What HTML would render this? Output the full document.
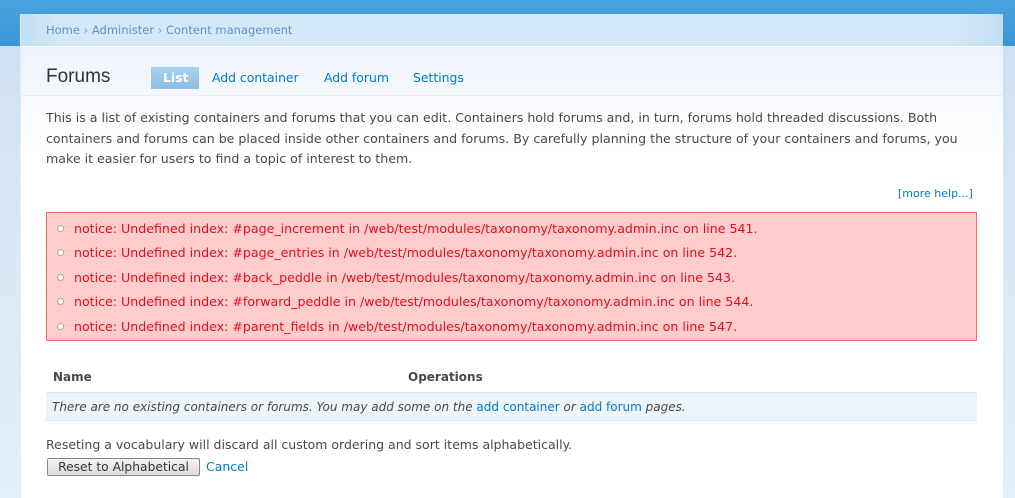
<!DOCTYPE html>
<html><head><meta charset="utf-8"><style>
body{margin:0;width:1015px;height:498px;overflow:hidden;font-family:"DejaVu Sans","Liberation Sans",sans-serif;font-size:12px;color:#494949;
background:linear-gradient(to bottom,#4aa3df 0,#3d95d8 46px,#cfe2f1 46px,#e4eff8 498px);position:relative}
a{color:#027ac6;text-decoration:none}
.page{position:absolute;left:20px;top:14px;width:982px;height:484px;background:#fff;border-left:1px solid #e0ecf7;}
.bc{height:32px;background:linear-gradient(to right,#c2dff4 0,#d4e8f7 40px,#d4e8f7 930px,#c2def4);border-bottom:1px solid #fff;font-size:11.5px;line-height:33px;padding-left:25px;color:#6fa0cc}
.bc a{color:#5b95cc}
.head{height:48px;background:linear-gradient(#edf4fb,#f4f8fc);border-bottom:1px solid #e6eef6;position:relative}
.head h1{position:absolute;left:25px;top:19px;margin:0;font-family:"Liberation Sans",sans-serif;font-weight:normal;font-size:19px;color:#333}
.tabs{position:absolute;left:130px;top:20px;font-size:12.4px}
.tabs span{position:absolute;white-space:nowrap;top:0;line-height:22px;color:#027ac6}
.tabs .act{background:linear-gradient(#a9d1ef,#8dbde3);color:#fff;font-weight:bold;padding:0 12px;left:0;width:24px}
.body{background:linear-gradient(#f6f9fc,#fff 60px)}
p.intro{margin:0;padding:12px 25px 0 25px;line-height:20.7px;width:935px;font-size:12.6px}
.more{position:absolute;left:877px;top:173px;font-size:11px}
.err{position:absolute;left:25px;top:198px;width:929px;height:127px;background:#ffcccc;border:1px solid #ed6e6e;color:#e10f1f;font-size:12.6px}
.err div{position:absolute;left:27px;white-space:nowrap}
.err i{position:absolute;left:-17px;top:4px;width:5px;height:5px;border-radius:50%;border:1px solid #aaa;background:#fff}
.th{position:absolute;top:356px;font-weight:bold;font-size:12px;color:#494949}
.row{position:absolute;left:25px;top:378px;width:931px;height:29px;background:#edf5fa;border-top:1px solid #d3e7f4;border-bottom:1px solid #d3e7f4;font-style:italic;line-height:29px;padding-left:6px;box-sizing:border-box}
.row a{font-style:normal}
.reset{position:absolute;left:25px;top:423px;font-size:12.5px}
.btn{position:absolute;left:26px;top:444px;width:151px;height:16px;border:1px solid #888;border-radius:2px;background:linear-gradient(#f4f4f4,#dcdcdc);font-size:12.3px;line-height:16px;text-align:center;color:#333}
.cancel{position:absolute;left:185px;top:445px;font-size:12.5px}
</style></head><body>
<div class="page">
<div class="bc"><a>Home</a> › <a>Administer</a> › <a>Content management</a></div>
<div class="head"><h1>Forums</h1>
<div class="tabs"><span class="act">List</span><span style="left:61px">Add container</span><span style="left:173px">Add forum</span><span style="left:262px">Settings</span></div></div>
<div class="body"><p class="intro">This is a list of existing containers and forums that you can edit. Containers hold forums and, in turn, forums hold threaded discussions. Both containers and forums can be placed inside other containers and forums. By carefully planning the structure of your containers and forums, you make it easier for users to find a topic of interest to them.</p></div>
<a class="more">[more help...]</a>
<div class="err">
<div style="top:8px"><i></i>notice: Undefined index: #page_increment in /web/test/modules/taxonomy/taxonomy.admin.inc on line 541.</div>
<div style="top:32px"><i></i>notice: Undefined index: #page_entries in /web/test/modules/taxonomy/taxonomy.admin.inc on line 542.</div>
<div style="top:57px"><i></i>notice: Undefined index: #back_peddle in /web/test/modules/taxonomy/taxonomy.admin.inc on line 543.</div>
<div style="top:81px"><i></i>notice: Undefined index: #forward_peddle in /web/test/modules/taxonomy/taxonomy.admin.inc on line 544.</div>
<div style="top:106px"><i></i>notice: Undefined index: #parent_fields in /web/test/modules/taxonomy/taxonomy.admin.inc on line 547.</div>
</div>
<div class="th" style="left:32px">Name</div><div class="th" style="left:387px">Operations</div>
<div class="row">There are no existing containers or forums. You may add some on the <a>add container</a> or <a>add forum</a> pages.</div>
<div class="reset">Reseting a vocabulary will discard all custom ordering and sort items alphabetically.</div>
<div class="btn">Reset to Alphabetical</div>
<a class="cancel">Cancel</a>
</div>
</body></html>
